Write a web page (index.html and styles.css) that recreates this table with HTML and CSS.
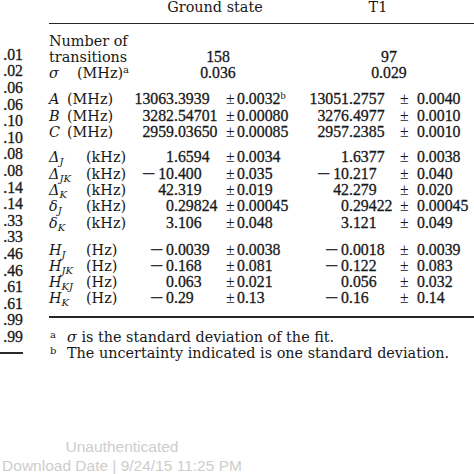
FILE: index.html
```html
<!DOCTYPE html>
<html lang="en">
<head>
<meta charset="utf-8">
<title>Table</title>
<link rel="stylesheet" href="styles.css">
</head>
<body>
<div class="page">
  <div class="top">
    <div class="leftcol">
      <div class="lrow"><span>.01</span></div>
      <div class="lrow"><span>.02</span></div>
      <div class="lrow"><span>.06</span></div>
      <div class="lrow"><span>.06</span></div>
      <div class="lrow"><span>.10</span></div>
      <div class="lrow"><span>.10</span></div>
      <div class="lrow"><span>.08</span></div>
      <div class="lrow"><span>.08</span></div>
      <div class="lrow"><span>.14</span></div>
      <div class="lrow"><span>.14</span></div>
      <div class="lrow"><span>.33</span></div>
      <div class="lrow"><span>.33</span></div>
      <div class="lrow"><span>.46</span></div>
      <div class="lrow"><span>.46</span></div>
      <div class="lrow"><span>.61</span></div>
      <div class="lrow"><span>.61</span></div>
      <div class="lrow"><span>.99</span></div>
      <div class="lrow"><span>.99</span></div>
      <div class="lrule"></div>
    </div>

    <div class="main">
      <div class="row head"><span class="gs">Ground state</span><span class="t1">T1</span></div>
      <div class="rule rule-top"></div>

      <div class="row hrow first"><span class="lab">Number of</span></div>
      <div class="row hrow"><span class="lab">transitions</span><span class="c1 num">158</span><span class="c2 num">97</span></div>
      <div class="row hrow"><span class="lab"><i class="sym w-sig">σ</i>(MHz)<sup class="sup">a</sup></span><span class="c1 num">0.036</span><span class="c2 num">0.029</span></div>

      <div class="row g-abc">
        <span class="lab"><i class="sym w-a">A</i>(MHz)</span>
        <span class="int">13063</span><span class="frac">.3939</span><span class="pm pm1">±</span><span class="err">0.0032<sup class="sup">b</sup></span>
        <span class="int">13051</span><span class="frac">.2757</span><span class="pm pm2">±</span><span class="err">0.0040</span>
      </div>
      <div class="row">
        <span class="lab"><i class="sym w-a">B</i>(MHz)</span>
        <span class="int">3282</span><span class="frac">.54701</span><span class="pm pm1">±</span><span class="err">0.00080</span>
        <span class="int">3276</span><span class="frac">.4977</span><span class="pm pm2">±</span><span class="err">0.0010</span>
      </div>
      <div class="row">
        <span class="lab"><i class="sym w-a">C</i>(MHz)</span>
        <span class="int">2959</span><span class="frac">.03650</span><span class="pm pm1">±</span><span class="err">0.00085</span>
        <span class="int">2957</span><span class="frac">.2385</span><span class="pm pm2">±</span><span class="err">0.0010</span>
      </div>

      <div class="row g-delta">
        <span class="lab"><i class="sym w-d">Δ<sub class="sub">J</sub></i>(kHz)</span>
        <span class="int">1</span><span class="frac">.6594</span><span class="pm pm1">±</span><span class="err">0.0034</span>
        <span class="int">1</span><span class="frac">.6377</span><span class="pm pm2">±</span><span class="err">0.0038</span>
      </div>
      <div class="row">
        <span class="lab"><i class="sym w-d">Δ<sub class="sub">JK</sub></i>(kHz)</span>
        <span class="int"><span class="minus">−</span>10</span><span class="frac">.400</span><span class="pm pm1">±</span><span class="err">0.035</span>
        <span class="int"><span class="minus">−</span>10</span><span class="frac">.217</span><span class="pm pm2">±</span><span class="err">0.040</span>
      </div>
      <div class="row">
        <span class="lab"><i class="sym w-d">Δ<sub class="sub">K</sub></i>(kHz)</span>
        <span class="int">42</span><span class="frac">.319</span><span class="pm pm1">±</span><span class="err">0.019</span>
        <span class="int">42</span><span class="frac">.279</span><span class="pm pm2">±</span><span class="err">0.020</span>
      </div>
      <div class="row">
        <span class="lab"><i class="sym w-d">δ<sub class="sub">J</sub></i>(kHz)</span>
        <span class="int">0</span><span class="frac">.29824</span><span class="pm pm1">±</span><span class="err">0.00045</span>
        <span class="int">0</span><span class="frac">.29422</span><span class="pm pm2">±</span><span class="err">0.00045</span>
      </div>
      <div class="row">
        <span class="lab"><i class="sym w-d">δ<sub class="sub">K</sub></i>(kHz)</span>
        <span class="int">3</span><span class="frac">.106</span><span class="pm pm1">±</span><span class="err">0.048</span>
        <span class="int">3</span><span class="frac">.121</span><span class="pm pm2">±</span><span class="err">0.049</span>
      </div>

      <div class="row hg g-h">
        <span class="lab"><i class="sym w-d">H<sub class="sub">J</sub></i>(Hz)</span>
        <span class="int"><span class="minus">−</span>0</span><span class="frac">.0039</span><span class="pm pm1">±</span><span class="err">0.0038</span>
        <span class="int"><span class="minus">−</span>0</span><span class="frac">.0018</span><span class="pm pm2">±</span><span class="err">0.0039</span>
      </div>
      <div class="row hg">
        <span class="lab"><i class="sym w-d">H<sub class="sub">JK</sub></i>(Hz)</span>
        <span class="int"><span class="minus">−</span>0</span><span class="frac">.168</span><span class="pm pm1">±</span><span class="err">0.081</span>
        <span class="int"><span class="minus">−</span>0</span><span class="frac">.122</span><span class="pm pm2">±</span><span class="err">0.083</span>
      </div>
      <div class="row hg">
        <span class="lab"><i class="sym w-d">H<sub class="sub">KJ</sub></i>(Hz)</span>
        <span class="int">0</span><span class="frac">.063</span><span class="pm pm1">±</span><span class="err">0.021</span>
        <span class="int">0</span><span class="frac">.056</span><span class="pm pm2">±</span><span class="err">0.032</span>
      </div>
      <div class="row hg">
        <span class="lab"><i class="sym w-d">H<sub class="sub">K</sub></i>(Hz)</span>
        <span class="int"><span class="minus">−</span>0</span><span class="frac">.29</span><span class="pm pm1">±</span><span class="err">0.13</span>
        <span class="int"><span class="minus">−</span>0</span><span class="frac">.16</span><span class="pm pm2">±</span><span class="err">0.14</span>
      </div>

      <div class="rule rule-bottom"></div>

      <div class="fn first-fn"><span class="fnmark">a</span><i>σ</i> is the standard deviation of the fit.</div>
      <div class="fn"><span class="fnmark">b</span>The uncertainty indicated is one standard deviation.</div>
    </div>
  </div>

  <div class="watermark">
    <div>Unauthenticated</div>
    <div>Download Date | 9/24/15 11:25 PM</div>
  </div>
</div>
</body>
</html>
```

FILE: styles.css
```css
html, body {
  margin: 0;
  padding: 0;
  background: #ffffff;
}

body {
  width: 474px;
  height: 474px;
  overflow: hidden;
  color: #181818;
  font-family: "DejaVu Serif", "Liberation Serif", serif;
  font-size: 14.4px;
}

.page {
  width: 474px;
  height: 474px;
  overflow: hidden;
}

.top {
  display: flex;
  align-items: flex-start;
}

/* cropped column of the neighbouring table */
.leftcol {
  width: 23px;
  flex: none;
  padding-top: 46.8px;
}

.lrow {
  display: flex;
  justify-content: flex-end;
  height: 16.6px;
  line-height: 16.6px;
  font-family: "Liberation Serif", serif;
  font-size: 15.8px;
  -webkit-text-stroke: 0.3px #181818;
  white-space: nowrap;
}

.lrule {
  margin-top: 6.6px;
  height: 1.5px;
  background: #2a2a2a;
}

/* main table */
.main {
  margin-left: 26px;
  width: 425px;
  flex: none;
}

.row {
  display: grid;
  grid-template-columns: 81px 44px 48px 15px 63px 49px 48px 20px 57px;
  align-items: baseline;
  height: 16.4px;
  line-height: 16.4px;
  white-space: nowrap;
}

.head {
  height: 15px;
  line-height: 15px;
}

.gs {
  grid-column: 2 / 6;
  text-align: center;
}

.t1 {
  grid-column: 6 / 10;
  text-align: center;
  padding-right: 18px;
}

.rule {
  background: #262626;
  margin-right: -10px;
}

.rule-top {
  margin-top: 7.5px;
  height: 1.2px;
}

.rule-bottom {
  margin-top: 10.5px;
  height: 1.5px;
}

.hrow {
  height: 15.5px;
  line-height: 15.5px;
}

.first {
  margin-top: 10.3px;
}

.g-abc {
  margin-top: 10.8px;
}

.g-delta {
  margin-top: 8.8px;
}

.g-h {
  margin-top: 10.5px;
}

.hg {
  height: 16px;
  line-height: 16px;
}

.lab {
  grid-column: 1;
}

.sym {
  display: inline-block;
  font-style: italic;
}

.w-a { width: 18px; }
.w-sig { width: 28px; }
.w-d { width: 37px; }

.sub {
  font-size: 10px;
  font-style: italic;
  vertical-align: -3px;
  line-height: 0;
}

.sup {
  font-size: 10px;
  vertical-align: 5px;
  line-height: 0;
}

.num, .int, .frac, .pm, .err {
  font-family: "Liberation Serif", serif;
  font-size: 15.8px;
  -webkit-text-stroke: 0.3px #181818;
}

.err .sup {
  font-size: 10.5px;
  -webkit-text-stroke: 0;
}

.c1 {
  grid-column: 2 / 6;
  text-align: center;
  padding-left: 6px;
}

.c2 {
  grid-column: 6 / 10;
  text-align: center;
  padding-left: 4px;
}

.int {
  text-align: right;
}

.frac {
  text-align: left;
}

.pm1 { padding-left: 4px; }
.pm2 { padding-left: 3px; }

.pm {
  -webkit-text-stroke: 0;
}

.minus {
  display: inline-block;
  width: 16px;
  text-align: left;
  transform: scaleX(1.5);
  transform-origin: 0 50%;
}

/* footnotes */
.fn {
  height: 16px;
  line-height: 16px;
  white-space: nowrap;
}

.first-fn {
  margin-top: 11.2px;
}

.fnmark {
  display: inline-block;
  width: 18px;
  padding-left: 1px;
  box-sizing: border-box;
  font-size: 10px;
  vertical-align: 4px;
  line-height: 0;
}

/* watermark */
.watermark {
  margin-top: 76.5px;
  width: 244px;
  text-align: center;
  color: #cdcdcd;
  font-family: "Liberation Sans", Arial, sans-serif;
  font-size: 15.5px;
  line-height: 19px;
  white-space: nowrap;
}
```
